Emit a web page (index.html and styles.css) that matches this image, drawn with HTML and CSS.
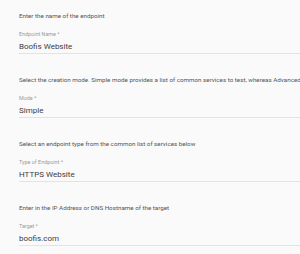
FILE: index.html
```html
<!DOCTYPE html>
<html>
<head>
<meta charset="utf-8">
<link rel="stylesheet" href="styles.css">
</head>
<body>
<div class="form">
  <section class="step">
    <p class="desc">Enter the name of the endpoint</p>
    <div class="field">
      <label class="label">Endpoint Name *</label>
      <div class="value">Boofis Website</div>
    </div>
  </section>
  <section class="step">
    <p class="desc">Select the creation mode. Simple mode provides a list of common services to test, whereas Advanced mode lets you configure every option</p>
    <div class="field">
      <label class="label">Mode *</label>
      <div class="value">Simple</div>
    </div>
  </section>
  <section class="step">
    <p class="desc">Select an endpoint type from the common list of services below</p>
    <div class="field">
      <label class="label">Type of Endpoint *</label>
      <div class="value">HTTPS Website</div>
    </div>
  </section>
  <section class="step">
    <p class="desc">Enter in the IP Address or DNS Hostname of the target</p>
    <div class="field">
      <label class="label">Target *</label>
      <div class="value">boofis.com</div>
    </div>
  </section>
</div>
</body>
</html>
```

FILE: styles.css
```css
html, body {
  margin: 0;
  padding: 0;
  background: #fafafa;
  font-family: Roboto, "Liberation Sans", sans-serif;
  overflow: hidden;
}
.form {
  padding-left: 19px;
}
.step {
  padding-top: 12px;
  height: 52px;
}
.desc {
  margin: 0;
  font-size: 6.25px;
  line-height: 8px;
  color: #555;
  white-space: nowrap;
  overflow: hidden;
}
.field {
  margin-top: 11px;
  border-bottom: 1px solid #e3e3e3;
  padding-bottom: 1px;
}
.label {
  display: block;
  font-size: 5.4px;
  line-height: 7px;
  color: #9a9a9a;
}
.value {
  margin-top: 4px;
  font-size: 8px;
  line-height: 10px;
  color: #3c3c3c;
}
```
